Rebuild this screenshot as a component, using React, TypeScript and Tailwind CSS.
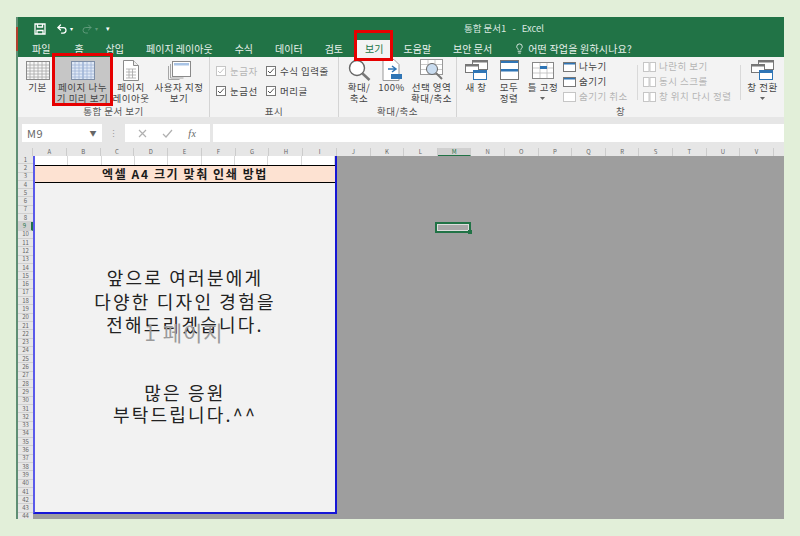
import type { ReactNode } from "react";
import { Lightbulb, Redo2, Undo2 } from "lucide-react";

const COLUMNS_IN_PAGE = ["A", "B", "C", "D", "E", "F", "G", "H", "I"];
const COLUMNS_OUTSIDE = ["J", "K", "L", "M", "N", "O", "P", "Q", "R", "S", "T", "U", "V"];
const ROWS = Array.from({ length: 44 }, (_, i) => i + 1);

function Tab({ label, active, className }: { label: string; active?: boolean; className?: string }) {
  return (
    <div
      className={
        active
          ? `ml-[2px] flex h-full items-center bg-[#f3f3f3] px-[9px] text-[#217346] ${className ?? ""}`
          : `flex h-full items-center px-[11px] text-[#e8f1ec] ${className ?? ""}`
      }
    >
      {label}
    </div>
  );
}

function GridIcon({ selected }: { selected?: boolean }) {
  const stroke = selected ? "#9fb4d6" : "#a6a6a6";
  return (
    <svg width="24" height="19" viewBox="0 0 24 19">
      <rect x="0.5" y="0.5" width="23" height="18" fill={selected ? "#dfe8f5" : "#f7f7f7"} stroke={selected ? "#7f8fa8" : "#8a8a8a"} />
      {[4, 8, 12, 16, 20].map((x) => (
        <line key={x} x1={x} y1="1" x2={x} y2="18" stroke={stroke} strokeWidth={x === 12 && selected ? 1.6 : 0.8} />
      ))}
      {[4, 7, 10, 13, 16].map((y) => (
        <line key={y} x1="1" y1={y} x2="23" y2={y} stroke={stroke} strokeWidth="0.8" />
      ))}
    </svg>
  );
}

function PageIcon() {
  return (
    <svg width="18" height="21" viewBox="0 0 18 21">
      <path d="M1.5.5h10l5 5v15h-15z" fill="#fff" stroke="#8a8a8a" />
      <path d="M11.5.5v5h5" fill="#eee" stroke="#8a8a8a" />
      <path d="M4 9h10M4 12h10M4 15h10M4 18h10M7 9v9M10.5 9v9" stroke="#a6a6a6" strokeWidth="0.8" />
    </svg>
  );
}

function CustomViewIcon() {
  return (
    <svg width="23" height="19" viewBox="0 0 23 19">
      <rect x="4.5" y="0.5" width="18" height="15" fill="#fff" stroke="#8a8a8a" />
      <rect x="6" y="2" width="15" height="2.5" fill="#a9c4e6" />
      <path d="M2.5 3v14h13M.5 5v13.500h11" fill="none" stroke="#a6a6a6" />
    </svg>
  );
}

function BigButton({
  icon,
  lines,
  className,
  caret,
}: {
  icon: ReactNode;
  lines: string[];
  className: string;
  caret?: boolean;
}) {
  return (
    <div className={`flex shrink-0 flex-col items-center pt-[3px] ${className}`}>
      <div className="flex h-[20px] items-center justify-center">{icon}</div>
      <div className="mt-[2px] text-center leading-[11px] whitespace-nowrap">
        {lines.map((line) => (
          <div key={line}>{line}</div>
        ))}
        {caret && (
          <svg className="mx-auto mt-[4px]" width="5" height="3" viewBox="0 0 5 3">
            <path d="M0 0h5L2.500 3z" fill="#666" />
          </svg>
        )}
      </div>
    </div>
  );
}

function Check({ label, disabled }: { label: string; disabled?: boolean }) {
  return (
    <div className={`flex items-center gap-[4px] leading-[12px] ${disabled ? "text-[#b5b5b5]" : ""}`}>
      <svg width="10" height="10" viewBox="0 0 10 10">
        <rect x="0.5" y="0.5" width="9" height="9" fill="#fff" stroke={disabled ? "#c6c6c6" : "#777"} />
        <path d="M2 5l2 2 4-4.500" fill="none" stroke={disabled ? "#c6c6c6" : "#555"} strokeWidth="1" />
      </svg>
      {label}
    </div>
  );
}

function GroupLabel({ label }: { label: string }) {
  return <div className="flex h-[12px] items-center justify-center pt-[1px] leading-none text-[#555]">{label}</div>;
}

function WindowStack() {
  return (
    <svg width="23" height="20" viewBox="0 0 23 20">
      <rect x="7.500" y="0.500" width="15" height="9" fill="#fff" stroke="#777" />
      <rect x="7.500" y="0.500" width="15" height="2" fill="#777" />
      <rect x="0.500" y="4.500" width="13" height="8" fill="#fff" stroke="#777" />
      <rect x="0.500" y="4.500" width="13" height="2" fill="#777" />
      <rect x="8.500" y="10.500" width="13" height="9" fill="#fff" stroke="#2f75b5" />
      <rect x="8.500" y="10.500" width="13" height="2.500" fill="#2f75b5" />
    </svg>
  );
}

function SmallWindowIcon({ disabled }: { disabled?: boolean }) {
  const c = disabled ? "#c6c6c6" : "#2f75b5";
  return (
    <svg width="13" height="10" viewBox="0 0 13 10">
      <rect x="0.500" y="0.500" width="12" height="9" fill="#fff" stroke={disabled ? "#c6c6c6" : "#777"} />
      {!disabled && <rect x="1" y="1" width="11" height="1.500" fill={c} />}
    </svg>
  );
}

function SideBySideIcon() {
  return (
    <svg width="13" height="10" viewBox="0 0 13 10" stroke="#c6c6c6" fill="#fff">
      <rect x="0.500" y="0.500" width="5.500" height="9" />
      <rect x="7" y="0.500" width="5.500" height="9" />
    </svg>
  );
}

export default function App() {
  return (
    <div
      className="h-[536px] w-[800px] overflow-hidden bg-[#e2efd9] pt-[17px] pl-[16px] text-[#444]"
      style={{ fontFamily: '"Noto Sans CJK KR", "Noto Sans", sans-serif' }}
    >
      <div className="relative flex h-[502px] w-[768px] flex-col border-l-2 border-[#5f8f74] text-[9.5px] tracking-[0.5px]">
        <div className="absolute top-[10px] -left-[2px] h-[24px] w-[2px] bg-[#b3402e]" />

        {/* title bar */}
        <div className="flex h-[23px] items-center bg-[#217346] text-white">
          <div className="flex w-[400px] items-center pl-[16px]">
            <svg width="12" height="12" viewBox="0 0 12 12" fill="none" stroke="#fff" strokeWidth="1.300">
              <path d="M1 1h10v10H1zM3.500 1v3h5V1M3 11V7.500h6V11" />
            </svg>
            <Undo2 className="ml-[10px] h-[12px] w-[12px]" strokeWidth={2.500} />
            <span className="ml-[2px] text-[6px]">▾</span>
            <Redo2 className="ml-[7px] h-[12px] w-[12px] text-[#5f9a7a]" strokeWidth={2} />
            <span className="ml-[2px] text-[6px] text-[#5f9a7a]">▾</span>
            <span className="ml-[8px] text-[7px]">▾</span>
          </div>
          <div className="ml-[46px] flex gap-[6px] text-[9.5px] tracking-normal text-[#dbe8e0]">
            <span>통합 문서1</span>
            <span>-</span>
            <span>Excel</span>
          </div>
        </div>

        {/* tabs */}
        <div className="flex h-[17px] items-center bg-[#217346] pl-[3px] text-[10px] tracking-normal">
          <Tab label="파일" />
          <Tab label="홈" className="ml-[2px]" />
          <Tab label="삽입" />
          <Tab label="페이지 레이아웃" />
          <Tab label="수식" />
          <Tab label="데이터" />
          <Tab label="검토" />
          <Tab label="보기" active />
          <Tab label="도움말" />
          <Tab label="보안 문서" />
          <div className="ml-[11px] flex items-center gap-[3px] tracking-[0.2px] text-[#e8f1ec]">
            <Lightbulb className="h-[11px] w-[11px]" />
            어떤 작업을 원하시나요?
          </div>
        </div>

        {/* ribbon */}
        <div className="flex h-[60px] bg-[#f3f3f3]">
          <div className="flex w-[192px] shrink-0 flex-col border-r border-[#d4d4d4]">
            <div className="flex h-[48px] pl-[3px]">
              <BigButton className="w-[33px]" icon={<GridIcon />} lines={["기본"]} />
              <BigButton className="w-[57px] bg-[#c6c6c6]" icon={<GridIcon selected />} lines={["페이지 나누", "기 미리 보기"]} />
              <BigButton className="w-[40px]" icon={<PageIcon />} lines={["페이지", "레이아웃"]} />
              <BigButton className="w-[56px]" icon={<CustomViewIcon />} lines={["사용자 지정", "보기"]} />
            </div>
            <GroupLabel label="통합 문서 보기" />
          </div>

          <div className="flex w-[129px] shrink-0 flex-col border-r border-[#d4d4d4]">
            <div className="grid h-[48px] grid-cols-[50px_1fr] content-start gap-y-[8px] pt-[8px] pl-[6px]">
              <Check label="눈금자" disabled />
              <Check label="수식 입력줄" />
              <Check label="눈금선" />
              <Check label="머리글" />
            </div>
            <GroupLabel label="표시" />
          </div>

          <div className="flex w-[118px] shrink-0 flex-col border-r border-[#d4d4d4]">
            <div className="flex h-[48px] pl-[4px]">
              <BigButton
                className="w-[32px]"
                icon={
                  <svg width="23" height="22" viewBox="0 0 23 22" fill="none">
                    <circle cx="9" cy="9" r="7.500" fill="#fff" stroke="#666" strokeWidth="1.400" />
                    <path d="M14.500 14.500l7 6.500" stroke="#777" strokeWidth="2.500" />
                  </svg>
                }
                lines={["확대/", "축소"]}
              />
              <BigButton
                className="w-[33px]"
                icon={
                  <svg width="20" height="22" viewBox="0 0 20 22">
                    <path d="M1 .5h11l5 5v16H1z" fill="#fff" stroke="#999" />
                    <path d="M6 10h7M10 7l4 3-4 3" fill="none" stroke="#2f75b5" strokeWidth="1.500" />
                    <rect x="9" y="15" width="11" height="5" fill="#2f75b5" />
                  </svg>
                }
                lines={["100%"]}
              />
              <BigButton
                className="w-[47px]"
                icon={
                  <svg width="24" height="22" viewBox="0 0 24 22" fill="none">
                    <rect x="0.500" y="0.500" width="22" height="15" fill="#fff" stroke="#999" />
                    <path d="M8 1v14M15 1v14M1 5.500h21M1 10.500h21" stroke="#bbb" strokeWidth="0.800" />
                    <circle cx="12" cy="10" r="5.500" fill="#c9dcf0" stroke="#666" />
                    <path d="M16 14l6 6" stroke="#777" strokeWidth="2" />
                  </svg>
                }
                lines={["선택 영역", "확대/축소"]}
              />
            </div>
            <GroupLabel label="확대/축소" />
          </div>

          <div className="flex min-w-0 flex-1 flex-col">
            <div className="flex h-[48px] pl-[1px]">
              <BigButton className="w-[36px]" icon={<WindowStack />} lines={["새 창"]} />
              <BigButton
                className="w-[30px]"
                icon={
                  <svg width="19" height="20" viewBox="0 0 19 20">
                    <rect x="0.500" y="0.500" width="18" height="19" fill="#fff" stroke="#777" />
                    <rect x="1" y="1" width="17" height="2" fill="#2f75b5" />
                    <rect x="1" y="9" width="17" height="2.500" fill="#2f75b5" />
                  </svg>
                }
                lines={["모두", "정렬"]}
              />
              <BigButton
                className="w-[38px]"
                icon={
                  <svg width="22" height="17" viewBox="0 0 22 17">
                    <rect x="0.500" y="0.500" width="21" height="16" fill="#fff" stroke="#888" />
                    <path d="M1 6h20M1 11h20M8 1v15M15 1v15" stroke="#bbb" strokeWidth="0.800" />
                    <rect x="8" y="4" width="7" height="3" fill="#2f75b5" />
                  </svg>
                }
                lines={["틀 고정"]}
                caret
              />
              <div className="ml-[1px] flex w-[74px] shrink-0 flex-col gap-[4px] pt-[4px] leading-[11px]">
                <div className="flex items-center gap-[3px]"><SmallWindowIcon />나누기</div>
                <div className="flex items-center gap-[3px]"><SmallWindowIcon />숨기기</div>
                <div className="flex items-center gap-[3px] text-[#b5b5b5]"><SmallWindowIcon disabled />숨기기 취소</div>
              </div>
              <div className="mt-[8px] h-[35px] w-px shrink-0 bg-[#d9d9d9]" />
              <div className="flex w-[102px] shrink-0 flex-col gap-[4px] pt-[4px] pl-[5px] leading-[11px] text-[#b5b5b5]">
                <div className="flex items-center gap-[3px]"><SideBySideIcon />나란히 보기</div>
                <div className="flex items-center gap-[3px]"><SideBySideIcon />동시 스크롤</div>
                <div className="flex items-center gap-[3px] whitespace-nowrap"><SideBySideIcon />창 위치 다시 정렬</div>
              </div>
              <div className="mt-[8px] h-[35px] w-px shrink-0 bg-[#d9d9d9]" />
              <BigButton className="w-[43px]" icon={<WindowStack />} lines={["창 전환"]} caret />
            </div>
            <div className="w-[327px]">
              <GroupLabel label="창" />
            </div>
          </div>
        </div>

        {/* formula bar */}
        <div className="flex h-[31px] items-center bg-[#e6e6e6] pt-[7px] pb-[6px] pl-[4px] text-[#666]">
          <div className="flex h-full w-[80px] items-center justify-between bg-white pr-[5px] pl-[5px] text-[11px]">
            M9
            <span className="text-[7px]">▼</span>
          </div>
          <div className="w-[23px] text-center text-[9px] leading-none text-[#999]">⋮</div>
          <div className="flex h-full w-[85px] items-center justify-around bg-white px-[6px] text-[#aaa]">
            <svg width="9" height="9" viewBox="0 0 9 9" stroke="#b0b0b0" strokeWidth="1.200"><path d="M1 1l7 7M8 1L1 8" /></svg>
            <svg width="11" height="9" viewBox="0 0 11 9" fill="none" stroke="#b0b0b0" strokeWidth="1.200"><path d="M1 5l3 3 6-7" /></svg>
            <span className="font-['Liberation_Serif',serif] text-[10px] text-[#666] italic">fx</span>
          </div>
          <div className="ml-[3px] h-full flex-1 bg-white" />
        </div>

        {/* column headers */}
        <div className="flex h-[8px] bg-[#e6e6e6] text-[6px] leading-[8px] tracking-normal text-[#666]">
          <div className="w-[15px] shrink-0 border-r border-[#ccc]" />
          <div className="flex w-[304px] shrink-0">
            {COLUMNS_IN_PAGE.map((c) => (
              <div key={c} className="flex-1 border-r border-[#ccc] text-center">{c}</div>
            ))}
          </div>
          {COLUMNS_OUTSIDE.map((c) => (
            <div
              key={c}
              className={
                c === "M"
                  ? "w-[33.600px] shrink-0 border-r border-b border-[#ccc] border-b-[#217346] bg-[#d0d0d0] text-center text-[#217346]"
                  : "w-[33.600px] shrink-0 border-r border-[#ccc] text-center"
              }
            >
              {c}
            </div>
          ))}
        </div>

        {/* sheet */}
        <div className="flex h-[363px] bg-[#9e9e9e]">
          <div className="flex w-[15px] shrink-0 flex-col overflow-hidden bg-[#e6e6e6] text-[6px] leading-none tracking-normal text-[#666]">
            {ROWS.map((row) => (
              <div
                key={row}
                className={
                  row === 9
                    ? "flex h-[8.300px] shrink-0 items-center justify-center border-r-2 border-b border-[#d0d0d0] border-r-[#217346] bg-[#d0d0d0] text-[#217346]"
                    : "flex h-[8.300px] shrink-0 items-center justify-center border-b border-[#d0d0d0]"
                }
              >
                {row}
              </div>
            ))}
          </div>

          <div className="relative flex h-[358px] w-[304px] shrink-0 flex-col border-[2.500px] border-t-0 border-[#1616d6] border-l-[#5a5aea] bg-[#f2f2f2]">
            <div className="flex h-[9px] shrink-0 bg-white">
              {COLUMNS_IN_PAGE.map((c) => (
                <div key={c} className="flex-1 border-r border-[#d9d9d9]" />
              ))}
            </div>
            <div className="flex h-[18px] shrink-0 items-center justify-center border-y border-black bg-[#fde2d2] text-[12px] font-bold tracking-[1.600px] text-[#1a1a1a]">
              엑셀 A4 크기 맞춰 인쇄 방법
            </div>
            <div className="mt-[83px] text-center text-[18px] leading-[23.500px] tracking-[2.200px] text-[#222]">
              <div>앞으로 여러분에게</div>
              <div>다양한 디자인 경험을</div>
              <div>전해드리겠습니다.</div>
              <div className="mt-[44px]">많은 응원</div>
              <div className="-mt-[1px]">부탁드립니다.^^</div>
            </div>
            <div className="absolute top-[166px] left-0 w-full pr-[2px] text-center text-[21px] leading-none tracking-[1px] text-[#9a9a9a]">
              1 페이지
            </div>
          </div>

          {/* selected cell M9 */}
          <div className="relative flex-1">
            <div className="absolute top-[66px] left-[98px] h-[11px] w-[36px] border-2 border-[#217346] bg-[#a8a8a8] outline outline-offset-[-3px] outline-[#ddd]">
              <div className="absolute -right-[3px] -bottom-[3px] h-[4px] w-[4px] bg-[#217346]" />
            </div>
          </div>
        </div>

        {/* red callouts from the original capture */}
        <div className="absolute top-[36px] left-[34px] h-[53px] w-[61px] border-[3px] border-[#e60000]" />
        <div className="absolute top-[13px] left-[336px] h-[31px] w-[39px] border-[3px] border-[#e60000]" />
      </div>
    </div>
  );
}
